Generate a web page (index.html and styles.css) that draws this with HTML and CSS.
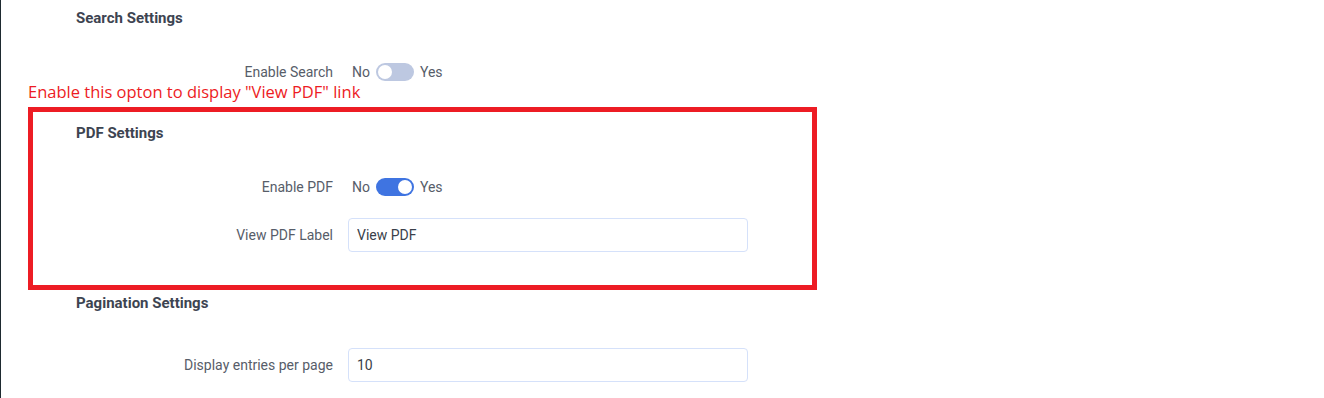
FILE: index.html
```html
<!DOCTYPE html>
<html lang="en">

<head>
    <meta charset="UTF-8">
    <meta name="viewport" content="width=device-width, initial-scale=1.0">
    <title>Settings</title>
    <link rel="stylesheet" href="styles.css">
</head>

<body>
    <div class="page">
        <!-- search -->
        <div class="section">
            <div class="section-title">Search Settings</div>
            <div class="field">
                <label class="field-label">Enable Search</label>
                <div class="switch-group">
                    <span>No</span>
                    <span class="switch"></span>
                    <span>Yes</span>
                </div>
            </div>
        </div>

        <div class="note">Enable this opton to display "View PDF" link</div>

        <!-- pdf, highlighted -->
        <div class="section highlight">
            <div class="section-title">PDF Settings</div>
            <div class="field">
                <label class="field-label">Enable PDF</label>
                <div class="switch-group">
                    <span>No</span>
                    <span class="switch on"></span>
                    <span>Yes</span>
                </div>
            </div>
            <div class="field field-input">
                <label class="field-label">View PDF Label</label>
                <input class="text-input" type="text" value="View PDF">
            </div>
        </div>

        <!-- pagination -->
        <div class="section pagination">
            <div class="section-title">Pagination Settings</div>
            <div class="field field-input">
                <label class="field-label">Display entries per page</label>
                <input class="text-input" type="text" value="10">
            </div>
        </div>
    </div>
</body>

</html>
```

FILE: styles.css
```css
:root {
    --heading-color: #3d4451;
    --label-color: #575d69;
    --switch-on: #3f74e1;
    --switch-off: #bdc8e1;
    --input-border: #d5e1fa;
    --note-red: #ed1c24;
}

body {
    margin: 0;
    font-family: Roboto, "Liberation Sans", sans-serif;
    background-color: #fff;
    overflow: hidden;
}

.page {
    min-height: 398px;
    box-sizing: border-box;
    border-left: 1px solid #1e2a30;
    padding: 8px 0 0 27px;
}

.section {
    padding-left: 48px;
}

.section-title {
    font-size: 15px;
    font-weight: bold;
    line-height: 20px;
    color: var(--heading-color);
    margin-bottom: 34px;
}

.field {
    display: flex;
    align-items: center;
    height: 20px;
    font-size: 14px;
    color: var(--label-color);
}

.field-input {
    height: 34px;
    margin-top: 21px;
}

.section-title + .field-input {
    margin-top: 0;
}

/* label column ends 15px before controls */
.field-label {
    width: 272px;
    padding-right: 15px;
    box-sizing: border-box;
    text-align: right;
    flex-shrink: 0;
}

.switch-group {
    display: flex;
    align-items: center;
    gap: 6px;
    padding-left: 4px;
}

.switch {
    position: relative;
    width: 38px;
    height: 18px;
    border-radius: 9px;
    background-color: var(--switch-off);
}

.switch::after {
    content: "";
    position: absolute;
    top: 2px;
    left: 2px;
    width: 14px;
    height: 14px;
    border-radius: 50%;
    background-color: #fff;
}

.switch.on {
    background-color: var(--switch-on);
}

.switch.on::after {
    left: 22px;
}

.text-input {
    width: 400px;
    height: 34px;
    box-sizing: border-box;
    border: 1px solid var(--input-border);
    border-radius: 4px;
    padding: 0 8px;
    font-family: inherit;
    font-size: 14px;
    color: #3a3f4a;
    background: #fff;
    outline: none;
}

.note {
    font-family: "Open Sans", sans-serif;
    font-size: 16.5px;
    line-height: 20px;
    color: var(--note-red);
    margin-bottom: 5px;
}

.highlight {
    width: 789px;
    box-sizing: border-box;
    border: 5px solid var(--note-red);
    padding: 11px 0 33px 43px;
}

.pagination {
    margin-top: 3px;
}

.pagination .section-title {
    margin-bottom: 35px;
}
```
